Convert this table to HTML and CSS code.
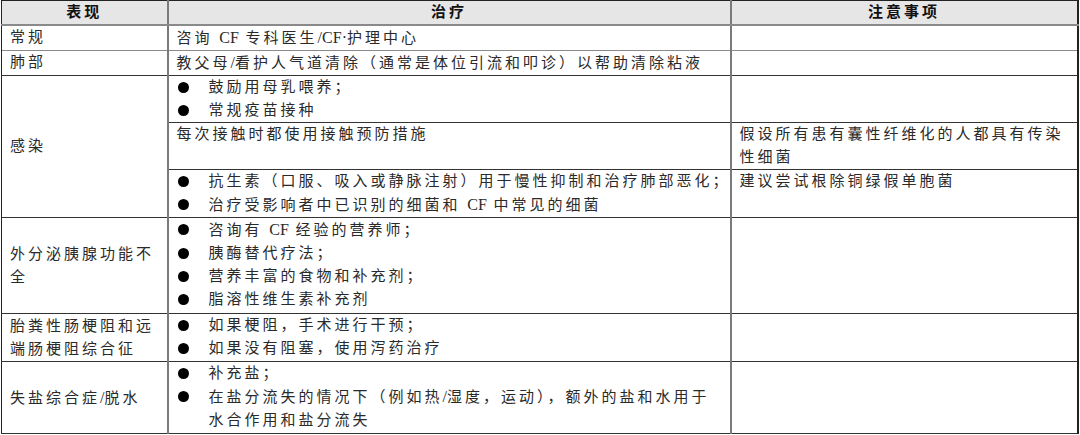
FILE: index.html
```html
<!DOCTYPE html>
<html lang="zh-CN">
<head>
<meta charset="utf-8">
<title>CF 表现与治疗</title>
<link rel="stylesheet" href="styles.css">
</head>
<body>
<table class="tbl">
  <colgroup>
    <col class="c1">
    <col class="c2">
    <col class="c3">
  </colgroup>
  <thead>
    <tr class="head">
      <th>表现</th>
      <th>治疗</th>
      <th>注意事项</th>
    </tr>
  </thead>
  <tbody>
    <tr class="h1">
      <td class="lbl">常规</td>
      <td>咨询 <span class="lat">CF</span> 专科医生<span class="lat">/CF·</span>护理中心</td>
      <td></td>
    </tr>
    <tr class="h1 dark">
      <td class="lbl">肺部</td>
      <td>教父母<span class="lat">/</span>看护人气道清除（通常是体位引流和叩诊）以帮助清除粘液</td>
      <td></td>
    </tr>
    <tr class="h2">
      <td class="lbl mid" rowspan="3">感染</td>
      <td>
        <ul class="bl">
          <li><span class="dot"></span><span>鼓励用母乳喂养；</span></li>
          <li><span class="dot"></span><span>常规疫苗接种</span></li>
        </ul>
      </td>
      <td></td>
    </tr>
    <tr class="h2">
      <td>每次接触时都使用接触预防措施</td>
      <td>假设所有患有囊性纤维化的人都具有传染<br>性细菌</td>
    </tr>
    <tr class="h2 dark">
      <td>
        <ul class="bl">
          <li><span class="dot"></span><span>抗生素（口服、吸入或静脉注射）用于慢性抑制和治疗肺部恶化；</span></li>
          <li><span class="dot"></span><span>治疗受影响者中已识别的细菌和 <span class="lat">CF</span> 中常见的细菌</span></li>
        </ul>
      </td>
      <td>建议尝试根除铜绿假单胞菌</td>
    </tr>
    <tr class="h4 dark">
      <td class="lbl mid">外分泌胰腺功能不<br>全</td>
      <td>
        <ul class="bl">
          <li><span class="dot"></span><span>咨询有 <span class="lat">CF</span> 经验的营养师；</span></li>
          <li><span class="dot"></span><span>胰酶替代疗法；</span></li>
          <li><span class="dot"></span><span>营养丰富的食物和补充剂；</span></li>
          <li><span class="dot"></span><span>脂溶性维生素补充剂</span></li>
        </ul>
      </td>
      <td></td>
    </tr>
    <tr class="h2b dark">
      <td class="lbl mid">胎粪性肠梗阻和远<br>端肠梗阻综合征</td>
      <td>
        <ul class="bl">
          <li><span class="dot"></span><span>如果梗阻，手术进行干预；</span></li>
          <li><span class="dot"></span><span>如果没有阻塞，使用泻药治疗</span></li>
        </ul>
      </td>
      <td></td>
    </tr>
    <tr class="h3 dark">
      <td class="lbl mid">失盐综合症<span class="lat">/</span>脱水</td>
      <td>
        <ul class="bl">
          <li><span class="dot"></span><span>补充盐；</span></li>
          <li><span class="dot"></span><span>在盐分流失的情况下（例如热<span class="lat">/</span>湿度，运动），额外的盐和水用于<br>水合作用和盐分流失</span></li>
        </ul>
      </td>
      <td></td>
    </tr>
  </tbody>
</table>
</body>
</html>
```

FILE: styles.css
```css
html, body {
  margin: 0;
  padding: 0;
  background: #ffffff;
}

.tbl {
  margin: 0 0 0 1px;
  width: 1076px;
  table-layout: fixed;
  border-collapse: collapse;
  font-family: "Liberation Serif", "Noto Sans CJK SC", serif;
  font-size: 15px;
  letter-spacing: 3px;
  color: #2a2a2a;
  border-top: 1px solid #222;
  border-left: 1px solid #222;
  border-right: 2px solid #222;
  border-bottom: 1px solid #222;
}

.c1 { width: 166px; }
.c2 { width: 563px; }
.c3 { width: 347px; }

.head th {
  background: #e6e6e6;
  height: 23px;
  padding: 0;
  font-weight: 700;
  color: #111;
  text-align: center;
  line-height: 23px;
  border-bottom: 2px solid #8a8a8a;
  border-left: 2px solid #7a7a7a;
}

.head th:first-child {
  border-left: 1px solid #222;
}

td {
  padding: 0 8px;
  vertical-align: top;
  line-height: 23px;
  border-top: 1px solid #8a8a8a;
  border-left: 2px solid #7a7a7a;
  white-space: nowrap;
}

td.lbl {
  border-left: 1px solid #222;
}

td.mid {
  vertical-align: middle;
}

tr.dark td {
  border-bottom: 1px solid #333;
}

tr.h1 td { height: 23px; }
tr.h2 td { height: 46px; }
tr.h2b td { height: 47px; }
tr.h3 td { height: 71px; }
tr.h4 td { height: 95px; }

tr.h2 td, tr.h2b td, tr.h3 td, tr.h4 td {
  border-top: 1px solid #333;
}

.lat {
  letter-spacing: 0;
  font-size: 16px;
}

.bl {
  list-style: none;
  margin: 0;
  padding: 0;
}

.bl li {
  display: flex;
  align-items: flex-start;
}

.dot {
  flex: none;
  display: block;
  width: 11px;
  height: 11px;
  margin: 6px 20px 0 1px;
  border-radius: 50%;
  background: #000;
}
```
